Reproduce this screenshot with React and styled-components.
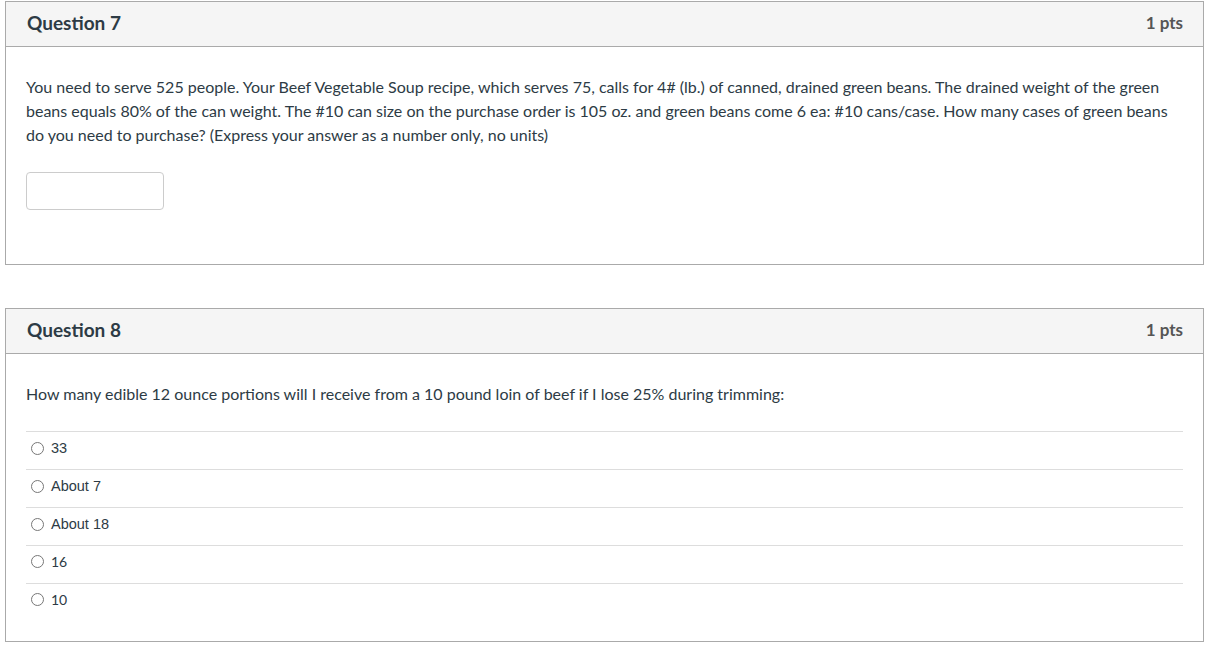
import styled, { createGlobalStyle } from "styled-components";

const GlobalStyle = createGlobalStyle`
  body {
    margin: 0;
    padding: 1px 3px 0 5px;
    background: #fff;
    font-family: Lato, "Liberation Sans", sans-serif;
    color: #2d3b45;
  }
`;

const Card = styled.div`
  border: 1px solid #aaa;
  width: 1199px;
  box-sizing: border-box;
  margin-bottom: ${(p) => p.$gap || 0}px;
`;

const Header = styled.div`
  display: flex;
  justify-content: space-between;
  align-items: center;
  height: 45px;
  box-sizing: border-box;
  padding: 0 20px 4px 21px;
  background: #f5f5f5;
  border-bottom: 1px solid #aaa;
  h2 {
    margin: 0;
    font-size: 19px;
    font-weight: 700;
    color: #2d3b45;
  }
  span {
    font-size: 17px;
    font-weight: 700;
    color: #555;
  }
`;

const Body = styled.div`
  padding: 28px 20px ${(p) => p.$bottom}px 20px;
`;

const Text = styled.p`
  margin: 0;
  font-size: 16px;
  line-height: 24px;
`;

const AnswerBox = styled.input`
  display: block;
  margin-top: 25px;
  width: 138px;
  height: 38px;
  box-sizing: border-box;
  border: 1px solid #ccc;
  border-radius: 4px;
  background: #fff;
`;

const Answers = styled.div`
  margin-top: 25px;
`;

const Answer = styled.label`
  display: flex;
  align-items: center;
  height: 38px;
  padding-bottom: ${(p) => (p.$lato ? 7 : 5)}px;
  box-sizing: border-box;
  border-top: 1px solid #ddd;
  font-family: ${(p) => (p.$lato ? "Lato" : "'Liberation Sans'")}, sans-serif;
  font-size: ${(p) => (p.$lato ? 14 : 14.5)}px;
  color: #2d3b45;
`;

const Radio = styled.span`
  width: 11px;
  height: 11px;
  border: 1px solid #777;
  border-radius: 50%;
  margin: 0 7px 0 5px;
  background: #fff;
`;

const options = [
  { text: "33" },
  { text: "About 7" },
  { text: "About 18" },
  { text: "16", lato: true },
  { text: "10", lato: true },
];

const App = () => {
  return (
    <>
      <GlobalStyle />
      <Card $gap={43}>
        <Header>
          <h2>Question 7</h2>
          <span>1 pts</span>
        </Header>
        <Body $bottom={54}>
          <Text>
            You need to serve 525 people. Your Beef Vegetable Soup recipe, which serves 75, calls for 4# (lb.) of
            canned, drained green beans. The drained weight of the green beans equals 80% of the can weight. The #10
            can size on the purchase order is 105 oz. and green beans come 6 ea: #10 cans/case. How many cases of
            green beans do you need to purchase? (Express your answer as a number only, no units)
          </Text>
          <AnswerBox type="text" />
        </Body>
      </Card>
      <Card>
        <Header>
          <h2>Question 8</h2>
          <span>1 pts</span>
        </Header>
        <Body $bottom={20}>
          <Text>
            How many edible 12 ounce portions will I receive from a 10 pound loin of beef if I lose 25% during
            trimming:
          </Text>
          <Answers>
            {options.map((o) => (
              <Answer key={o.text} $lato={o.lato}>
                <Radio />
                {o.text}
              </Answer>
            ))}
          </Answers>
        </Body>
      </Card>
    </>
  );
};

export default App;
